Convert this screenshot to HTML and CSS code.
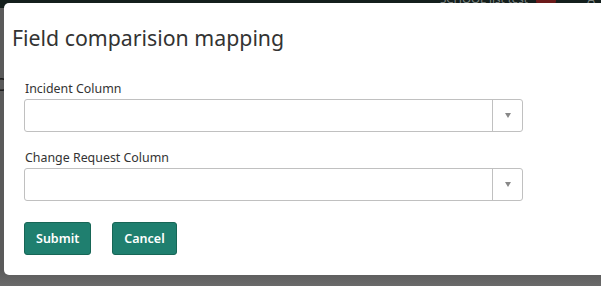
FILE: index.html
```html
<!DOCTYPE html>
<html>
<head>
<meta charset="utf-8">
<link rel="stylesheet" href="styles.css">
</head>
<body>
<div class="page">
  <div class="topbar"><span class="crumb">SCHOOL list test</span><span class="badge">5</span><span class="user">A</span></div>
  <div class="under"><span class="under-c">C</span></div>
</div>
<div class="modal">
  <h1 class="title">Field comparision mapping</h1>
  <div class="field">
    <label class="label">Incident Column</label>
    <div class="select"><div class="select-value"></div><div class="select-arrow"><span class="tri"></span></div></div>
  </div>
  <div class="field">
    <label class="label">Change Request Column</label>
    <div class="select"><div class="select-value"></div><div class="select-arrow"><span class="tri"></span></div></div>
  </div>
  <div class="actions">
    <button class="btn">Submit</button>
    <button class="btn">Cancel</button>
  </div>
</div>
</body>
</html>
```
FILE: styles.css
```css
html, body {
  margin: 0;
  padding: 0;
  width: 601px;
  height: 286px;
  overflow: hidden;
}
body {
  background: #5a5a5a;
  font-family: "Source Sans Pro", "Noto Sans", "Open Sans", sans-serif;
  position: relative;
}
.page {
  height: 286px;
  background: linear-gradient(#5a5a5a 0, #5a5a5a 270px, #6a6a6a 286px);
}
.topbar {
  height: 8px;
  background: #141f1d;
  position: relative;
  overflow: hidden;
}
.crumb {
  position: absolute;
  left: 440px;
  top: -8px;
  color: #7d8583;
  font-size: 11.5px;
  line-height: 14px;
  white-space: nowrap;
}
.badge {
  position: absolute;
  left: 536px;
  top: -6px;
  width: 20px;
  height: 10px;
  background: #6b1a1a;
  border-radius: 3px;
  color: transparent;
  font-size: 8px;
  line-height: 10px;
}
.user {
  position: absolute;
  left: 587px;
  top: -8px;
  color: #7d8583;
  font-size: 13px;
  line-height: 14px;
}
.under {
  height: 60px;
}
.under-c {
  position: absolute;
  left: -6px;
  top: 72px;
  color: #1d1d1d;
  font-size: 18px;
}
.modal {
  position: absolute;
  left: 4px;
  top: 3px;
  width: 604px;
  height: 272px;
  background: #fff;
  border-radius: 5px;
  box-sizing: border-box;
  padding: 20px 0 0 20px;
}
.title {
  margin: 0 0 28px -12px;
  font-weight: 400;
  font-size: 21.3px;
  line-height: 30px;
  color: #333;
}
.field {
  margin-bottom: 18px;
}
.label {
  display: block;
  font-size: 12.4px;
  line-height: 16px;
  color: #333;
  margin-left: 1px;
  margin-bottom: 2px;
}
.select {
  width: 499px;
  height: 33px;
  box-sizing: border-box;
  border: 1px solid #c0c0c0;
  border-radius: 3px;
  display: flex;
}
.select-value {
  flex: 1;
}
.select-arrow {
  width: 29px;
  border-left: 1px solid #c0c0c0;
  display: flex;
  align-items: center;
  justify-content: center;
}
.tri {
  width: 0;
  height: 0;
  border-left: 3px solid transparent;
  border-right: 3px solid transparent;
  border-top: 5px solid #888;
}
.actions {
  display: flex;
  gap: 21px;
  margin-top: 21px;
}
.btn {
  height: 33px;
  padding: 0 11px;
  background: #1f7f6f;
  border: 1px solid #176656;
  border-radius: 3px;
  color: #fff;
  font-family: inherit;
  font-size: 12.5px;
  font-weight: 600;
}
```
